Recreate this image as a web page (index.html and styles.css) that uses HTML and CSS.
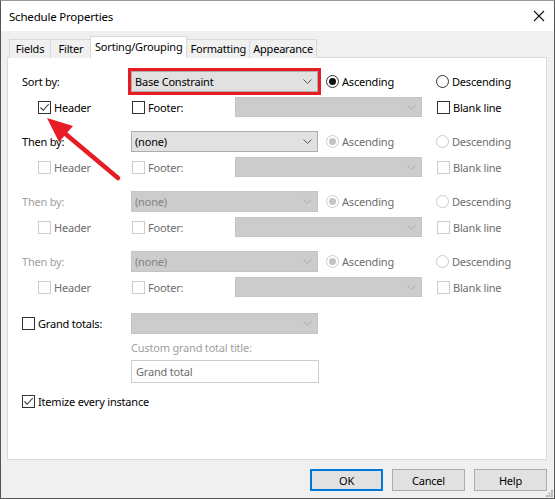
FILE: index.html
```html
<!DOCTYPE html>
<html>
<head>
<meta charset="utf-8">
<link rel="stylesheet" href="styles.css">
</head>
<body>
<div class="window">
  <div class="titlebar">
    <span class="title">Schedule Properties</span>
    <svg class="close" width="12" height="12" viewBox="0 0 12 12"><path d="M1 1 L11 11 M11 1 L1 11" stroke="#111" stroke-width="1.1" fill="none"/></svg>
  </div>
  <div class="client">
    <div class="tabs">
      <div class="tab">Fields</div>
      <div class="tab">Filter</div>
      <div class="tab active">Sorting/Grouping</div>
      <div class="tab">Formatting</div>
      <div class="tab">Appearance</div>
    </div>
    <div class="panel">
      <div class="block">
        <div class="row main">
          <span class="lbl">Sort by:</span>
          <div class="combo en hl"><span class="val">Base Constraint</span><svg class="chev" width="9" height="5" viewBox="0 0 9 5"><path d="M0.5 0.5 L4.5 4.5 L8.5 0.5" stroke="#555" fill="none"/></svg></div>
          <div class="opt asc"><span class="radio on"></span><span>Ascending</span></div>
          <div class="opt"><span class="radio"></span><span>Descending</span></div>
        </div>
        <div class="row sub">
          <div class="opt hdr"><span class="check"><svg width="11" height="11" viewBox="0 0 11 11"><path d="M1.5 5.5 L4.2 8.3 L9.8 2" stroke="#333" stroke-width="1.1" fill="none"/></svg></span><span>Header</span></div>
          <div class="opt ftr"><span class="check"></span><span>Footer:</span></div>
          <div class="combo dis wide"><span class="val"></span><svg class="chev" width="9" height="5" viewBox="0 0 9 5"><path d="M0.5 0.5 L4.5 4.5 L8.5 0.5" stroke="#a9a9a9" fill="none"/></svg></div>
          <div class="opt blank"><span class="check"></span><span>Blank line</span></div>
        </div>
      </div>

      <div class="block">
        <div class="row main">
          <span class="lbl">Then by:</span>
          <div class="combo en"><span class="val">(none)</span><svg class="chev" width="9" height="5" viewBox="0 0 9 5"><path d="M0.5 0.5 L4.5 4.5 L8.5 0.5" stroke="#555" fill="none"/></svg></div>
          <div class="opt asc off"><span class="radio on"></span><span>Ascending</span></div>
          <div class="opt off"><span class="radio"></span><span>Descending</span></div>
        </div>
        <div class="row sub off">
          <div class="opt hdr"><span class="check"></span><span>Header</span></div>
          <div class="opt ftr"><span class="check"></span><span>Footer:</span></div>
          <div class="combo dis wide"><span class="val"></span><svg class="chev" width="9" height="5" viewBox="0 0 9 5"><path d="M0.5 0.5 L4.5 4.5 L8.5 0.5" stroke="#a9a9a9" fill="none"/></svg></div>
          <div class="opt blank"><span class="check"></span><span>Blank line</span></div>
        </div>
      </div>

      <div class="block">
        <div class="row main off">
          <span class="lbl dim">Then by:</span>
          <div class="combo dis"><span class="val">(none)</span><svg class="chev" width="9" height="5" viewBox="0 0 9 5"><path d="M0.5 0.5 L4.5 4.5 L8.5 0.5" stroke="#a9a9a9" fill="none"/></svg></div>
          <div class="opt asc"><span class="radio on"></span><span>Ascending</span></div>
          <div class="opt"><span class="radio"></span><span>Descending</span></div>
        </div>
        <div class="row sub off">
          <div class="opt hdr"><span class="check"></span><span>Header</span></div>
          <div class="opt ftr"><span class="check"></span><span>Footer:</span></div>
          <div class="combo dis wide"><span class="val"></span><svg class="chev" width="9" height="5" viewBox="0 0 9 5"><path d="M0.5 0.5 L4.5 4.5 L8.5 0.5" stroke="#a9a9a9" fill="none"/></svg></div>
          <div class="opt blank"><span class="check"></span><span>Blank line</span></div>
        </div>
      </div>

      <div class="block">
        <div class="row main off">
          <span class="lbl dim">Then by:</span>
          <div class="combo dis"><span class="val">(none)</span><svg class="chev" width="9" height="5" viewBox="0 0 9 5"><path d="M0.5 0.5 L4.5 4.5 L8.5 0.5" stroke="#a9a9a9" fill="none"/></svg></div>
          <div class="opt asc"><span class="radio on"></span><span>Ascending</span></div>
          <div class="opt"><span class="radio"></span><span>Descending</span></div>
        </div>
        <div class="row sub off">
          <div class="opt hdr"><span class="check"></span><span>Header</span></div>
          <div class="opt ftr"><span class="check"></span><span>Footer:</span></div>
          <div class="combo dis wide"><span class="val"></span><svg class="chev" width="9" height="5" viewBox="0 0 9 5"><path d="M0.5 0.5 L4.5 4.5 L8.5 0.5" stroke="#a9a9a9" fill="none"/></svg></div>
          <div class="opt blank"><span class="check"></span><span>Blank line</span></div>
        </div>
      </div>

      <div class="totals">
        <div class="row main">
          <div class="opt gt"><span class="check"></span><span>Grand totals:</span></div>
          <div class="combo dis"><span class="val"></span><svg class="chev" width="9" height="5" viewBox="0 0 9 5"><path d="M0.5 0.5 L4.5 4.5 L8.5 0.5" stroke="#a9a9a9" fill="none"/></svg></div>
        </div>
        <div class="custom">
          <span class="dim">Custom grand total title:</span>
          <div class="textbox">Grand total</div>
        </div>
        <div class="opt itemize"><span class="check"><svg width="11" height="11" viewBox="0 0 11 11"><path d="M1.5 5.5 L4.2 8.3 L9.8 2" stroke="#333" stroke-width="1.1" fill="none"/></svg></span><span>Itemize every instance</span></div>
      </div>
    </div>
    <div class="buttons">
      <div class="btn default">OK</div>
      <div class="btn">Cancel</div>
      <div class="btn">Help</div>
    </div>
  </div>
  <svg class="arrow" width="555" height="499" viewBox="0 0 555 499">
    <line x1="118" y1="178" x2="62" y2="131" stroke="#e81c24" stroke-width="4.5" stroke-linecap="round"/>
    <polygon points="47,118 73,126 59,142" fill="#e81c24"/>
  </svg>
  <svg class="grip" width="7" height="7" viewBox="0 0 7 7">
    <rect x="5" y="0" width="2" height="2" fill="#b5b5b5"/>
    <rect x="2.5" y="2.5" width="2" height="2" fill="#b5b5b5"/>
    <rect x="5" y="2.5" width="2" height="2" fill="#b5b5b5"/>
    <rect x="0" y="5" width="2" height="2" fill="#b5b5b5"/>
    <rect x="2.5" y="5" width="2" height="2" fill="#b5b5b5"/>
    <rect x="5" y="5" width="2" height="2" fill="#b5b5b5"/>
  </svg>
</div>
</body>
</html>
```

FILE: styles.css
```css
* { box-sizing: border-box; }
html, body { margin: 0; padding: 0; }
body {
  font-family: "Noto Sans", "DejaVu Sans", sans-serif;
  font-size: 11px;
  letter-spacing: -0.2px;
  color: #000;
  background: #f0f0f0;
}
.window {
  position: relative;
  width: 555px;
  height: 499px;
  border: 1px solid #555;
  border-top-color: #9a9a9a;
  background: #f0f0f0;
  display: flex;
  flex-direction: column;
}
.titlebar {
  height: 30px;
  background: #fff;
  display: flex;
  align-items: center;
  justify-content: space-between;
  padding: 0 9px 0 8px;
}
.title { font-size: 11.5px; }
.close { display: block; }
.client {
  flex: 1;
  display: flex;
  flex-direction: column;
  padding: 6px 7px 0 6px;
}
.tabs {
  display: flex;
  align-items: flex-end;
  height: 21px;
  padding-left: 2px;
  position: relative;
  z-index: 1;
  margin-bottom: -1px;
}
.tab {
  min-width: 42px;
  height: 19px;
  line-height: 17px;
  padding: 0 3px;
  text-align: center;
  border: 1px solid #d9d9d9;
  border-bottom: none;
  margin-right: -1px;
  background: #f0f0f0;
}
.tab.active {
  height: 22px;
  line-height: 20px;
  background: #fff;
  padding: 0 4px;
  margin-left: -1px;
}
.panel {
  height: 403px;
  background: #fff;
  border: 1px solid #d9d9d9;
  padding: 13px 0 0 14px;
  display: flex;
  flex-direction: column;
}
.block {
  display: flex;
  flex-direction: column;
  gap: 5px;
  margin-bottom: 14px;
}
.row {
  display: flex;
  align-items: center;
}
.row.main { height: 21px; }
.row.sub { height: 20px; padding-left: 16px; }
.lbl { width: 109px; }
.dim { color: #a0a0a0; }
.off { color: #6d6d6d; }
.combo {
  width: 187px;
  height: 21px;
  display: flex;
  align-items: center;
  justify-content: space-between;
  padding: 0 5px 0 3px;
  border: 1px solid #adadad;
  background: #e1e1e1;
}
.combo.dis {
  background: #cccccc;
  border-color: #c4c4c4;
  color: #838383;
}
.combo.wide { height: 20px; }
.combo.hl {
  outline: 3px solid #e81c24;
  outline-offset: 0;
}
.chev { display: block; }
.opt {
  display: flex;
  align-items: center;
  gap: 3px;
}
.row.main .combo { margin-right: 8px; }
.asc { width: 110px; }
.hdr { width: 94px; }
.ftr { width: 103px; }
.row.sub .combo { margin-right: 15px; }
.check {
  width: 13px;
  height: 13px;
  border: 1px solid #333;
  background: #fff;
  display: flex;
  align-items: center;
  justify-content: center;
  flex: none;
}
.radio {
  width: 13px;
  height: 13px;
  border: 1px solid #333;
  border-radius: 50%;
  background: #fff;
  display: flex;
  align-items: center;
  justify-content: center;
  flex: none;
}
.radio.on::after {
  content: "";
  width: 7px;
  height: 7px;
  border-radius: 50%;
  background: #111;
}
.off .check, .off .radio { border-color: #cccccc; }
.off .radio.on::after { background: #c4c4c4; }
.totals {
  margin-top: 2px;
  display: flex;
  flex-direction: column;
}
.gt { width: 109px; }
.custom {
  padding-left: 109px;
  display: flex;
  flex-direction: column;
  gap: 5px;
  margin-top: 6px;
}
.textbox {
  width: 188px;
  height: 23px;
  border: 1px solid #cccccc;
  background: #fff;
  color: #6d6d6d;
  padding: 0 4px;
  display: flex;
  align-items: center;
}
.itemize { margin-top: 11px; }
.buttons {
  display: flex;
  justify-content: flex-end;
  gap: 9px;
  padding-top: 9px;
}
.btn {
  width: 73px;
  height: 22px;
  border: 1px solid #adadad;
  background: #e1e1e1;
  display: flex;
  align-items: center;
  justify-content: center;
}
.btn.default { border: 2px solid #0078d7; }
.arrow {
  position: absolute;
  left: -1px;
  top: -1px;
  pointer-events: none;
}
.grip {
  position: absolute;
  right: 1px;
  bottom: 1px;
}
```
